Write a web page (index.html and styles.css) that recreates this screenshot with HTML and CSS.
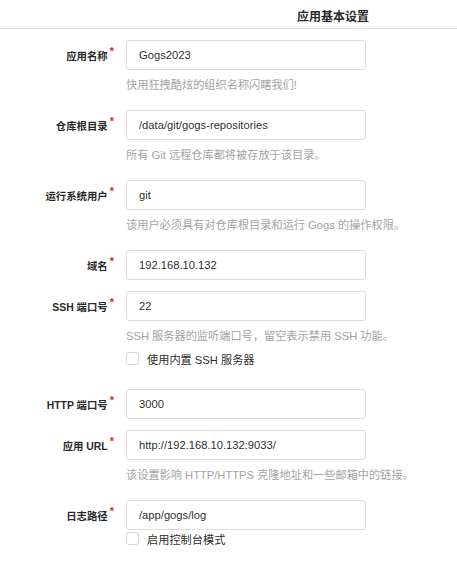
FILE: index.html
```html
<!DOCTYPE html>
<html lang="zh-CN">

<head>
	<meta charset="UTF-8">
	<meta name="viewport" content="width=device-width, initial-scale=1.0">
	<title>安装页面 - Gogs</title>
	<link rel="stylesheet" href="styles.css">
</head>

<body>

	<h4 class="section-header">应用基本设置</h4>

	<form class="install-form">
		<div class="field with-help">
			<label class="field-label required">应用名称</label>
			<input class="text-input" type="text" value="Gogs2023">
		</div>
		<div class="help">快用狂拽酷炫的组织名称闪瞎我们!</div>

		<div class="field with-help">
			<label class="field-label required">仓库根目录</label>
			<input class="text-input" type="text" value="/data/git/gogs-repositories">
		</div>
		<div class="help">所有 Git 远程仓库都将被存放于该目录。</div>

		<div class="field with-help">
			<label class="field-label required">运行系统用户</label>
			<input class="text-input" type="text" value="git">
		</div>
		<div class="help">该用户必须具有对仓库根目录和运行 Gogs 的操作权限。</div>

		<div class="field">
			<label class="field-label required">域名</label>
			<input class="text-input" type="text" value="192.168.10.132">
		</div>

		<div class="field with-help">
			<label class="field-label required">SSH 端口号</label>
			<input class="text-input" type="text" value="22">
		</div>
		<div class="help">SSH 服务器的监听端口号，留空表示禁用 SSH 功能。</div>
		<label class="checkbox-row spaced">
			<input type="checkbox">
			<span class="checkbox-box"></span>
			<span>使用内置 SSH 服务器</span>
		</label>

		<div class="field">
			<label class="field-label required">HTTP 端口号</label>
			<input class="text-input" type="text" value="3000">
		</div>

		<div class="field with-help">
			<label class="field-label required">应用 URL</label>
			<input class="text-input" type="text" value="http://192.168.10.132:9033/">
		</div>
		<div class="help">该设置影响 HTTP/HTTPS 克隆地址和一些邮箱中的链接。</div>

		<div class="field tight">
			<label class="field-label required">日志路径</label>
			<input class="text-input" type="text" value="/app/gogs/log">
		</div>
		<label class="checkbox-row">
			<input type="checkbox">
			<span class="checkbox-box"></span>
			<span>启用控制台模式</span>
		</label>
	</form>

</body>

</html>
```

FILE: styles.css
```css
body {
	margin: 0;
	background-color: #fff;
	color: rgba(0, 0, 0, 0.87);
	font-family: "Liberation Sans", "Noto Sans CJK SC", sans-serif;
	font-size: 11.2px;
}

.section-header {
	margin: 0;
	height: 28px;
	line-height: 34px;
	padding-left: 297px;
	border-bottom: 1px solid #dedede;
	font-size: 12px;
	font-weight: bold;
}

.install-form {
	padding-top: 11px;
}

.field {
	display: flex;
	align-items: center;
	margin-bottom: 11px;
}

.field.with-help {
	margin-bottom: 0;
}

.field.tight {
	margin-bottom: 0;
}

.field-label {
	flex: 0 0 114px;
	text-align: right;
	font-size: 10.4px;
	font-weight: bold;
	color: rgba(0, 0, 0, 0.87);
}

.field-label.required::after {
	content: '*';
	display: inline-block;
	vertical-align: top;
	margin: -3px 0 0 2px;
	color: #db2828;
	font-size: 11px;
}

.text-input {
	box-sizing: border-box;
	width: 240px;
	height: 30px;
	margin: 0 0 0 12px;
	padding: 0 12px;
	border: 1px solid #dcdcdc;
	border-radius: 3px;
	background: #fff;
	color: rgba(0, 0, 0, 0.87);
	font-family: "Liberation Sans", "Noto Sans CJK SC", sans-serif;
	font-size: 11.2px;
	outline: none;
}

.help {
	margin: 7px 0 17px 126px;
	line-height: 16px;
	color: #a3a3a3;
}

.checkbox-row {
	display: flex;
	align-items: center;
	height: 15px;
	margin-left: 126px;
	margin-top: 1px;
	cursor: pointer;
}

.checkbox-row.spaced {
	margin-top: -11px;
	margin-bottom: 22px;
	height: 17px;
}

.checkbox-row input {
	display: none;
}

.checkbox-box {
	box-sizing: border-box;
	width: 13px;
	height: 13px;
	margin-right: 8px;
	border: 1px solid #d4d4d5;
	border-radius: 3px;
	background: #fff;
}
```
